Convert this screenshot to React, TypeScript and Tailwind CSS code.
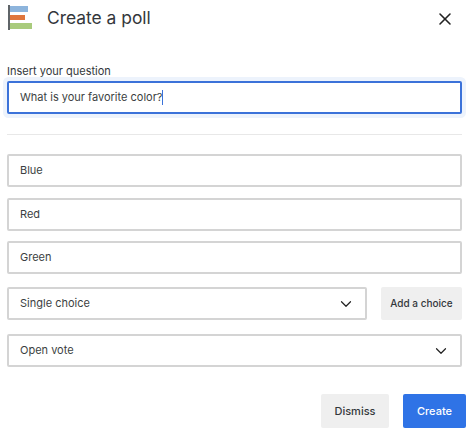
import { X, ChevronDown } from "lucide-react";

const font = "font-['Inter',sans-serif]";

function PollIcon() {
  return (
    <svg width="26" height="26" viewBox="0 0 26 26" className="blur-[0.4px]">
      <rect x="0" y="0" width="2" height="25" fill="#5f6468" />
      <rect x="2" y="1" width="18" height="6" fill="#8db4dc" />
      <rect x="2" y="10" width="15" height="5" fill="#e0763c" />
      <rect x="2" y="18" width="22" height="6" fill="#a9cb7c" />
    </svg>
  );
}

function TextRow({ text }: { text: string }) {
  return (
    <div className="h-[33px] border-2 border-[#d4d4d4] rounded-[2px] bg-white flex items-center px-[11px] text-[11px] text-[#3c3f42]">
      {text}
    </div>
  );
}

function SelectRow({ text }: { text: string }) {
  return (
    <div className="h-[33px] flex-1 border-2 border-[#d4d4d4] rounded-[2px] bg-white flex items-center justify-between pl-[11px] pr-[10px] text-[11px] text-[#3c3f42]">
      <span>{text}</span>
      <ChevronDown size={18} strokeWidth={1.6} color="#222" />
    </div>
  );
}

export default function App() {
  return (
    <div className={`w-[474px] h-[438px] bg-white overflow-hidden ${font}`}>
      <div className="flex items-center justify-between pl-[8px] pr-[19px] h-[37px]">
        <div className="flex items-center gap-[13px]">
          <PollIcon />
          <h1 className="text-[17.4px] text-[#33373b]">Create a poll</h1>
        </div>
        <X size={20} strokeWidth={1.9} color="#222" />
      </div>

      <div className="pl-[7px] pr-[12px] pt-[27px]">
        <label className="block text-[11px] leading-[15px] text-[#33373b] h-[17px]">Insert your question</label>
        <div className="relative h-[33px] border-2 border-[#3b72d9] rounded-[2px] bg-white shadow-[0_0_0_4px_#edf3fc] flex items-center px-[11px] text-[11px] text-[#3c3f42]">
          What is your favorite color?
          <span className="w-px h-[15px] bg-[#3b72d9]" />
        </div>

        <div className="h-px bg-[#e8e8e8] mt-[20px] mb-[19px]" />

        <div className="flex flex-col gap-[10.5px]">
          <TextRow text="Blue" />
          <TextRow text="Red" />
          <TextRow text="Green" />
        </div>

        <div className="flex gap-[14px] mt-[13px]">
          <SelectRow text="Single choice" />
          <button className="w-[81px] h-[33px] bg-[#efefef] rounded-[2px] text-[10px] font-medium text-[#33373b]">
            Add a choice
          </button>
        </div>

        <div className="flex mt-[14px]">
          <SelectRow text="Open vote" />
        </div>
      </div>

      <div className="flex justify-end gap-[14px] pr-[8px] mt-[27px]">
        <button className="w-[68px] h-[34px] bg-[#efefef] rounded-[2px] text-[11px] font-medium text-[#33373b]">
          Dismiss
        </button>
        <button className="w-[63px] h-[34px] bg-[#2f73e6] rounded-[2px] text-[11px] font-medium text-white">
          Create
        </button>
      </div>
    </div>
  );
}
